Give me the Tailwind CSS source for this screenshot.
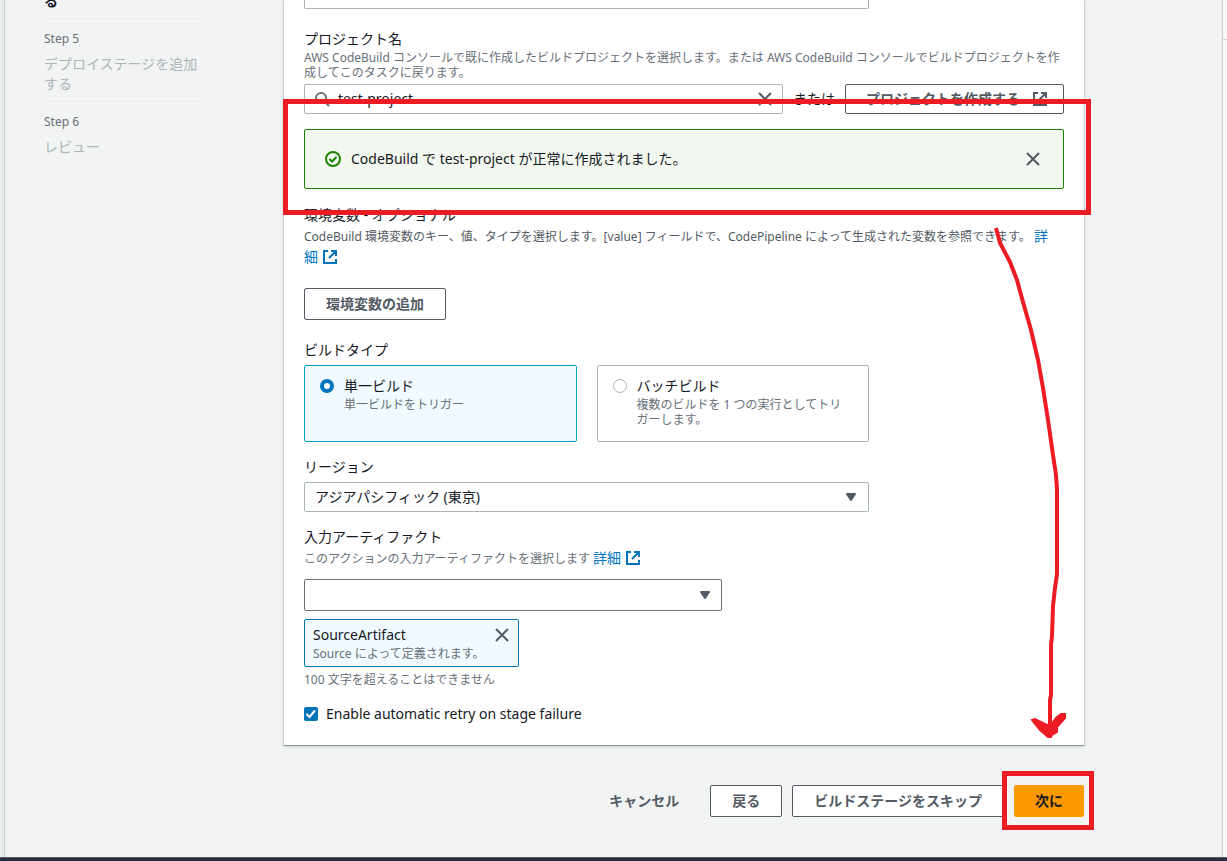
<!DOCTYPE html>
<html lang="ja">
<head>
    <meta charset="UTF-8">
    <meta name="viewport" content="width=device-width, initial-scale=1.0">
    <title>CodePipeline - ビルドステージを追加する</title>
    <script src="https://cdn.jsdelivr.net/npm/@tailwindcss/browser@4"></script>
    <style>
        body {
            font-family: 'Noto Sans', 'Noto Sans CJK JP', sans-serif;
        }
    </style>
</head>
<body class="bg-[#f2f3f3] text-sm leading-[22px] text-[#16191f]">
    <!-- Shared icons -->
    <svg class="hidden" xmlns="http://www.w3.org/2000/svg">
        <symbol id="icon-close" viewBox="0 0 16 16">
            <path d="M2 2l12 12M14 2L2 14" fill="none" stroke="currentColor" stroke-width="2"></path>
        </symbol>
        <symbol id="icon-external" viewBox="0 0 16 16">
            <path d="M6 2H2v12h12v-4M9 2h5v5M14 2L7 9" fill="none" stroke="currentColor" stroke-width="2"></path>
        </symbol>
        <symbol id="icon-caret" viewBox="0 0 16 16">
            <path d="M4 5h8l-4 6z" fill="currentColor" stroke="currentColor" stroke-width="2" stroke-linejoin="round"></path>
        </symbol>
    </svg>

    <div class="relative min-h-screen flex flex-col overflow-hidden">
        <div class="flex-1 flex">
            <!-- Collapsed left panel -->
            <div class="w-[5px] shrink-0 bg-[#eaeded] border-r border-[#c8cccc]"></div>

            <main class="flex-1 min-w-0 flex">
                <!-- Steps -->
                <nav class="w-[278px] shrink-0 pl-[39px] pr-[79px]">
                    <div class="h-[19px] flex items-end border-b border-[#eaeded]">
                        <span class="h-[27px] font-bold leading-5">る</span>
                    </div>
                    <div class="pt-2 pb-[7px] border-b border-[#eaeded]">
                        <div class="text-xs leading-6 text-[#687078]">Step 5</div>
                        <div class="pt-[3px] leading-5 text-[#aab7b8]">デプロイステージを追加する</div>
                    </div>
                    <div class="pt-2">
                        <div class="text-xs leading-6 text-[#687078]">Step 6</div>
                        <div class="pt-[3px] leading-5 text-[#aab7b8]">レビュー</div>
                    </div>
                </nav>

                <div class="flex-1 min-w-0 mr-[137px]">
                    <!-- Build form -->
                    <section class="bg-white border-x border-b border-x-[#cfd3d3] border-b-[#879596] px-5 pb-5 shadow-sm">
                        <div class="h-[9px] w-[565px] border border-t-0 border-[#aab7b8] rounded-b-xs"></div>

                        <div class="pt-[19px]">
                            <label for="project" class="block">プロジェクト名</label>
                            <p class="text-xs leading-[15px] text-[#687078]">AWS CodeBuild コンソールで既に作成したビルドプロジェクトを選択します。または AWS CodeBuild コンソールでビルドプロジェクトを作成してこのタスクに戻ります。</p>
                            <div class="mt-1 flex items-center">
                                <div class="flex-1 h-[30px] flex items-center px-[9px] border border-[#aab7b8] rounded-xs">
                                    <svg class="size-4 mr-2 text-[#687078]" viewBox="0 0 16 16" fill="none" stroke="currentColor" stroke-width="2">
                                        <circle cx="7" cy="7" r="5"></circle>
                                        <path d="M11 11l4 4"></path>
                                    </svg>
                                    <input id="project" type="text" value="test-project" class="flex-1 min-w-0 outline-none">
                                    <button aria-label="クリア" class="text-[#545b64]"><svg class="size-4"><use href="#icon-close"></use></svg></button>
                                </div>
                                <span class="px-[10px]">または</span>
                                <button class="h-[30px] w-[219px] flex items-center justify-between pl-5 pr-[15px] border border-[#545b64] rounded-xs font-bold text-[#545b64]">
                                    プロジェクトを作成する
                                    <svg class="size-4"><use href="#icon-external"></use></svg>
                                </button>
                            </div>
                        </div>

                        <!-- Success message -->
                        <div class="mt-[15px] h-[60px] flex items-center px-5 border border-[#1d8102] rounded-xs bg-[#f2f8f0]">
                            <svg class="size-4 mr-[10px] text-[#1d8102]" viewBox="0 0 16 16" fill="none" stroke="currentColor" stroke-width="2">
                                <circle cx="8" cy="8" r="7"></circle>
                                <path d="M4.5 8L7 10.5l4.5-4.5"></path>
                            </svg>
                            <span class="flex-1">CodeBuild で test-project が正常に作成されました。</span>
                            <button aria-label="閉じる" class="mr-[2px] text-[#545b64]"><svg class="size-4"><use href="#icon-close"></use></svg></button>
                        </div>

                        <div class="pt-[15px]">
                            <div>環境変数 - オプショナル</div>
                            <p class="text-xs leading-5 text-[#545b64]">CodeBuild 環境変数のキー、値、タイプを選択します。[value] フィールドで、CodePipeline によって生成された変数を参照できます。
                                <a href="#" class="text-sm leading-5 text-[#0073bb]">詳<span class="whitespace-nowrap">細 <svg class="inline size-4 align-[-3px]"><use href="#icon-external"></use></svg></span></a>
                            </p>
                            <button class="mt-5 h-8 px-[21px] border border-[#545b64] rounded-xs font-bold text-[#545b64]">環境変数の追加</button>
                        </div>

                        <!-- Build type -->
                        <fieldset class="pt-[19px] w-[565px]">
                            <legend class="float-left">ビルドタイプ</legend>
                            <div class="clear-both pt-1 grid grid-cols-2 gap-5">
                                <label class="h-[77px] flex gap-[10px] pt-[9px] px-[15px] border border-[#00a1c9] rounded-xs bg-[#f1faff]">
                                    <input type="radio" name="build" checked class="appearance-none size-[14px] mt-1 shrink-0 rounded-full border-4 border-[#0073bb] bg-white">
                                    <span>
                                        <span class="block">単一ビルド</span>
                                        <span class="block text-xs leading-[15px] text-[#687078]">単一ビルドをトリガー</span>
                                    </span>
                                </label>
                                <label class="h-[77px] flex gap-[10px] pt-[9px] px-[15px] border border-[#aab7b8] rounded-xs bg-white">
                                    <input type="radio" name="build" class="appearance-none size-[14px] mt-1 shrink-0 rounded-full border border-[#aab7b8] bg-white">
                                    <span>
                                        <span class="block">バッチビルド</span>
                                        <span class="block text-xs leading-[15px] text-[#687078]">複数のビルドを 1 つの実行としてトリガーします。</span>
                                    </span>
                                </label>
                            </div>
                        </fieldset>

                        <div class="pt-[14px] w-[565px]">
                            <label for="region" class="block">リージョン</label>
                            <div class="mt-1 grid items-center">
                                <select id="region" class="col-start-1 row-start-1 appearance-none h-[30px] px-[10px] border border-[#aab7b8] rounded-xs bg-white">
                                    <option>アジアパシフィック (東京)</option>
                                </select>
                                <svg class="col-start-1 row-start-1 justify-self-end mr-[10px] size-4 text-[#545b64] pointer-events-none"><use href="#icon-caret"></use></svg>
                            </div>
                        </div>

                        <!-- Input artifacts -->
                        <div class="pt-[14px]">
                            <label for="artifact" class="block">入力アーティファクト</label>
                            <p class="text-xs leading-5 text-[#687078]">このアクションの入力アーティファクトを選択します <a href="#" class="text-sm leading-5 text-[#0073bb]">詳細 <svg class="inline size-4 align-[-3px]"><use href="#icon-external"></use></svg></a></p>
                            <div class="mt-[10px] w-[418px] grid items-center">
                                <select id="artifact" class="col-start-1 row-start-1 appearance-none h-8 px-[10px] border border-[#687078] rounded-xs bg-white">
                                    <option></option>
                                </select>
                                <svg class="col-start-1 row-start-1 justify-self-end mr-[9px] size-4 text-[#545b64] pointer-events-none"><use href="#icon-caret"></use></svg>
                            </div>
                            <div class="mt-2 w-[215px] h-12 flex items-start justify-between pt-1 px-2 border border-[#0073bb] rounded-xs bg-[#f1faff]">
                                <div>
                                    <div>SourceArtifact</div>
                                    <div class="text-xs leading-[15px] text-[#687078]">Source によって定義されます。</div>
                                </div>
                                <button aria-label="SourceArtifact を削除" class="mt-[3px] text-[#545b64]"><svg class="size-4"><use href="#icon-close"></use></svg></button>
                            </div>
                            <p class="mt-1 text-xs leading-[18px] text-[#687078]">100 文字を超えることはできません</p>
                        </div>

                        <div class="pt-[14px] flex items-center gap-2">
                            <span class="grid">
                                <input id="retry" type="checkbox" checked class="col-start-1 row-start-1 appearance-none size-[14px] rounded-xs bg-[#0073bb]">
                                <svg class="col-start-1 row-start-1 size-[14px] text-white pointer-events-none" viewBox="0 0 14 14" fill="none" stroke="currentColor" stroke-width="2"><path d="M2.5 7l3 3 5.5-6.5"></path></svg>
                            </span>
                            <label for="retry">Enable automatic retry on stage failure</label>
                        </div>
                    </section>

                    <!-- Wizard actions -->
                    <div class="pt-[39px] pb-9 pr-px flex justify-end gap-[10px] font-bold text-[#545b64]">
                        <button class="h-8 px-[21px]">キャンセル</button>
                        <button class="h-8 px-[21px] border border-[#545b64] rounded-xs bg-white">戻る</button>
                        <button class="h-8 px-[21px] border border-[#545b64] rounded-xs bg-white">ビルドステージをスキップ</button>
                        <button class="h-8 px-5 border border-[#ff9900] rounded-xs bg-[#ff9900] text-[#16191f]">次に</button>
                    </div>
                </div>
            </main>

            <!-- Collapsed right panel -->
            <div class="w-[5px] shrink-0 bg-[#fafafa] border-l border-[#c8cccc]">
                <div class="h-10 border-b border-[#d5dbdb]"></div>
            </div>
        </div>

        <footer class="h-1 bg-[#232f3e] border-t border-[#545b64]"></footer>

        <!-- Hand-drawn annotations -->
        <svg class="absolute top-0 right-0 w-[1227px] h-[861px] pointer-events-none" viewBox="0 0 1227 861" fill="none" stroke="#ed1c24">
            <rect x="285.5" y="101.5" width="803" height="111" stroke-width="5"></rect>
            <rect x="1004.5" y="773.5" width="87" height="54" stroke-width="5"></rect>
            <path d="M996 228L1000 243L1010 262L1017 280L1023 302L1031 330L1038 360L1043 388L1048 420L1053 455L1056 475L1057 490V574L1055 588L1053 606L1052 636L1051 645V695L1050 700V732" stroke-width="4" stroke-linejoin="round"></path>
            <path d="M1032 720l3-1 12 6h4l5-7 5-4h4v4l-8 9v5l-5 3-1 2h-3l-8-7z" fill="#ed1c24" stroke-width="2"></path>
        </svg>
    </div>
</body>
</html>
